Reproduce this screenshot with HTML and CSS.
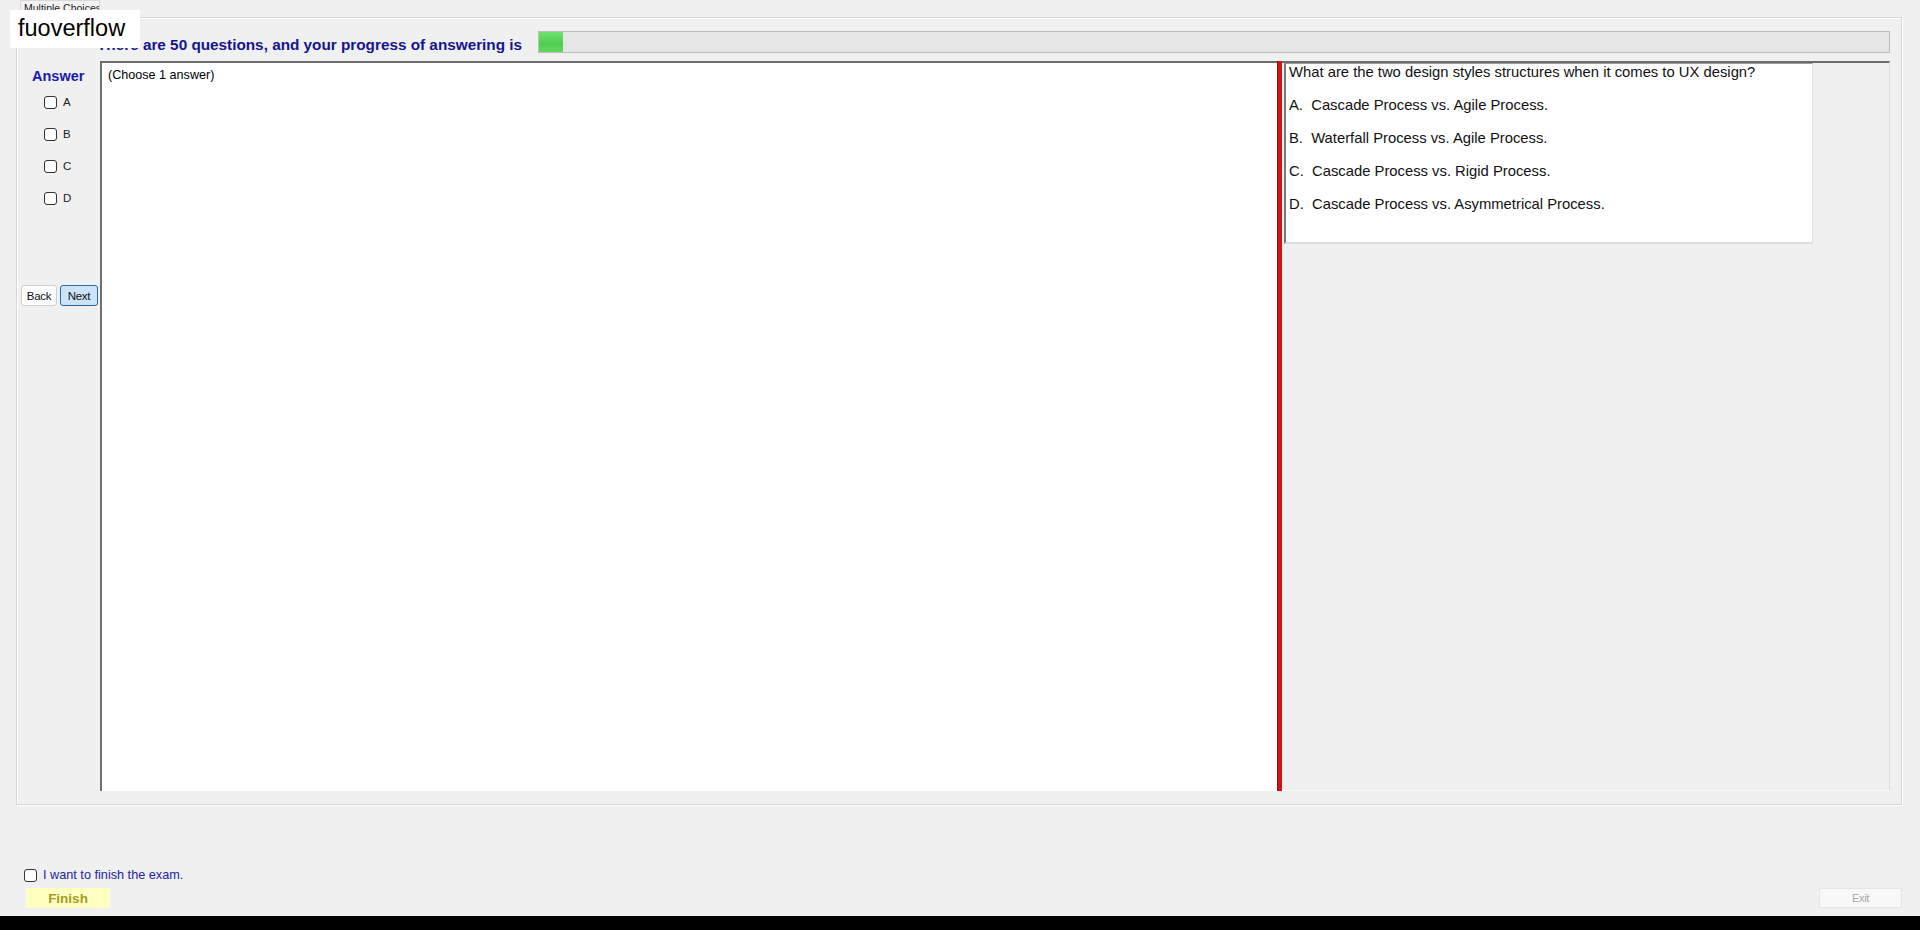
FILE: index.html
```html
<!DOCTYPE html>
<html lang="en">
<head>
  <meta charset="UTF-8" />
  <title>Multiple Choices</title>
  <link rel="stylesheet" href="styles.css">
</head>
<body>

  <div class="window">
    <div class="brand">fuoverflow</div>

    <div class="tabs">
      <div class="tab">Multiple Choices</div>
    </div>

    <div class="tabpage">
      <div class="progress-row">
        <span class="progress-text">There are 50 questions, and your progress of answering is</span>
        <div class="progress"><div class="progress-fill" style="width: 24px"></div></div>
      </div>

      <div class="main">
        <div class="answers">
          <div class="answers-title">Answer</div>
          <label class="opt"><input type="checkbox" class="box" /> A</label>
          <label class="opt"><input type="checkbox" class="box" /> B</label>
          <label class="opt"><input type="checkbox" class="box" /> C</label>
          <label class="opt"><input type="checkbox" class="box" /> D</label>
          <div class="nav">
            <button class="btn">Back</button>
            <button class="btn btn-next">Next</button>
          </div>
        </div>

        <div class="content">(Choose 1 answer)</div>

        <div class="splitter"></div>

        <div class="right">
          <div class="question">
            <p class="q-line">What are the two design styles structures when it comes to UX design?</p>
            <p class="q-line">A.&nbsp; Cascade Process vs. Agile Process.</p>
            <p class="q-line">B.&nbsp; Waterfall Process vs. Agile Process.</p>
            <p class="q-line">C.&nbsp; Cascade Process vs. Rigid Process.</p>
            <p class="q-line">D.&nbsp; Cascade Process vs. Asymmetrical Process.</p>
          </div>
        </div>
      </div>
    </div>

    <div class="footer">
      <div class="finish-group">
        <label class="finish-check"><input type="checkbox" class="box" /> I want to finish the exam.</label>
        <button class="btn-finish">Finish</button>
      </div>
      <button class="btn-exit">Exit</button>
    </div>
  </div>

  <div class="blackbar"></div>

</body>
</html>
```

FILE: styles.css
```css
body {
  margin: 0;
  height: 930px;
  background: #f0f0f0;
  font-family: 'Liberation Sans', Arial, sans-serif;
  color: #000;
  display: flex;
  flex-direction: column;
  overflow: hidden;
}
.window {
  position: relative;
  flex: 1;
  display: flex;
  flex-direction: column;
}
.brand {
  position: absolute;
  left: 10px;
  top: 10px;
  width: 130px;
  height: 38px;
  box-sizing: border-box;
  padding-left: 8px;
  background: #fff;
  font-size: 23.5px;
  line-height: 37px;
  z-index: 2;
}
.tabs {
  height: 17px;
  padding-left: 20px;
  display: flex;
}
.tab {
  width: 80px;
  box-sizing: border-box;
  border: 1px solid #d9d9d9;
  border-bottom: none;
  background: #f3f3f3;
  font-size: 10.5px;
  line-height: 14px;
  padding-left: 3px;
  color: #222;
  white-space: nowrap;
  overflow: hidden;
}
.tabpage {
  margin-left: 16px;
  width: 1886px;
  height: 788px;
  box-sizing: border-box;
  border: 1px solid #d6d6d6;
  box-shadow: inset 1px 1px 0 #fff, 1px 1px 0 #fff;
  display: flex;
  flex-direction: column;
}
.progress-row {
  height: 43px;
  display: flex;
  align-items: flex-end;
  padding-left: 80px;
  padding-bottom: 8px;
  box-sizing: border-box;
}
.progress-text {
  color: #15158e;
  font-weight: bold;
  font-size: 15.3px;
  line-height: 18px;
  margin-bottom: -1px;
  white-space: nowrap;
}
.progress {
  margin-left: 16px;
  width: 1352px;
  height: 22px;
  box-sizing: border-box;
  border: 1px solid #bcbcbc;
  background: #e6e6e6;
}
.progress-fill {
  height: 100%;
  background: linear-gradient(#6fe06f, #4fcf4f 60%, #62d862);
}
.main {
  height: 730px;
  display: flex;
  margin-right: 11px;
}
.answers {
  width: 83px;
  padding-top: 6px;
  box-sizing: border-box;
  display: flex;
  flex-direction: column;
}
.answers-title {
  color: #1a1aa8;
  font-weight: bold;
  font-size: 14.5px;
  line-height: 18px;
  padding-left: 15px;
  height: 20px;
}
.opt {
  height: 32px;
  display: flex;
  align-items: center;
  padding-left: 27px;
  font-size: 11.5px;
  color: #222;
  gap: 6px;
  margin-top: -1px;
  margin-bottom: 1px;
}
.box {
  appearance: none;
  -webkit-appearance: none;
  margin: 0;
  width: 13px;
  height: 13px;
  box-sizing: border-box;
  border: 1px solid #333;
  border-radius: 3px;
  background: #fff;
}
.nav {
  margin-top: 70px;
  display: flex;
  gap: 3px;
  padding-left: 4px;
}
.btn {
  height: 21px;
  width: 36px;
  padding: 0;
  box-sizing: border-box;
  border: 1px solid #d0d0d0;
  border-radius: 3px;
  background: #fdfdfd;
  font-family: 'Liberation Sans', Arial, sans-serif;
  font-size: 11.5px;
  color: #111;
  letter-spacing: -0.3px;
}
.btn-next {
  width: 38px;
  background: #cce4f7;
  border-color: #2a6a9c;
}
.content {
  width: 1177px;
  box-sizing: border-box;
  background: #fff;
  border-left: 2px solid #707070;
  border-top: 2px solid #6c6c6c;
  padding: 4px 6px;
  font-size: 12.6px;
  line-height: 16px;
}
.splitter {
  width: 5px;
  background: #d21414;
  border-left: 1px solid #8a1010;
  box-sizing: border-box;
}
.right {
  flex: 1;
  border-top: 2px solid #6c6c6c;
  border-right: 1px solid #dcdcdc;
  border-bottom: 1px solid #fafafa;
  box-sizing: border-box;
  padding-left: 2px;
}
.question {
  width: 529px;
  height: 181px;
  box-sizing: border-box;
  background: #fff;
  border-left: 2px solid #7a7a7a;
  border-top: 1px solid #9a9a9a;
  border-right: 1px solid #dedede;
  border-bottom: 2px solid #dedede;
  padding: 0 3px;
}
.q-line {
  margin: 0 0 16px 0;
  font-size: 14.8px;
  line-height: 17px;
  color: #111;
  white-space: nowrap;
}
.footer {
  flex: 1;
  display: flex;
  justify-content: space-between;
  align-items: flex-end;
  padding: 0 18px 8px 24px;
}
.finish-group {
  display: flex;
  flex-direction: column;
  gap: 6px;
}
.finish-check {
  display: flex;
  align-items: center;
  gap: 6px;
  font-size: 12.7px;
  color: #2424a0;
}
.btn-finish {
  margin-left: 2px;
  width: 84px;
  height: 20px;
  padding: 0;
  border: none;
  background: #ffffc2;
  color: #9e9e22;
  font-family: 'Liberation Sans', Arial, sans-serif;
  font-weight: bold;
  font-size: 13.5px;
}
.btn-exit {
  width: 83px;
  height: 20px;
  padding: 0;
  border: 1px solid #e6e6e6;
  background: #f8f8f8;
  color: #a8a8a8;
  font-family: 'Liberation Sans', Arial, sans-serif;
  font-size: 11px;
  letter-spacing: -0.3px;
}
.blackbar {
  height: 14px;
  background: #000;
}
```
